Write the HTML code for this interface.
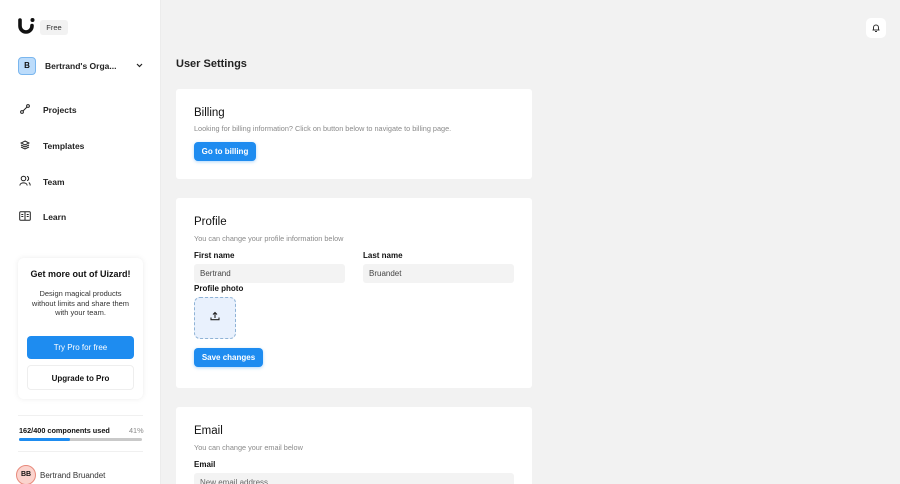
<!DOCTYPE html>
<html style="overflow:hidden;width:900px;height:484px"><head><meta charset="utf-8"><style>
*{box-sizing:border-box;margin:0;padding:0}
body{width:900px;height:484px;overflow:hidden;background:#f2f2f2;font-family:"Liberation Sans",sans-serif;color:#111;position:relative}
.abs{position:absolute}
.side{left:0;top:0;width:161px;height:484px;background:#fff;border-right:1px solid #ececec}
.nav{font-size:8.5px;font-weight:bold;color:#222}
.card{background:#fff;border-radius:3px;left:176px;width:356px}
h2{font-size:11.5px;font-weight:normal;color:#111}
.sub{font-size:7.3px;color:#8a8a8a}
.btn{background:#1e8cf0;color:#fff;font-size:8px;font-weight:bold;border-radius:4px;text-align:center;box-shadow:0 1px 3px rgba(30,140,240,.35)}
.lbl{font-size:8px;font-weight:bold}
.inp{background:#f3f3f3;border-radius:3px;font-size:8px;color:#444;padding-left:6px;line-height:19px;height:19px}
</style></head><body>
<div class="abs side">
  <svg class="abs" style="left:17px;top:17px" width="20" height="18" viewBox="0 0 20 18"><path d="M3 3 V9 A6 6 0 0 0 15 9 V8.5" fill="none" stroke="#111" stroke-width="3.6" stroke-linecap="round"/><circle cx="15.5" cy="3" r="2" fill="#111"/></svg>
  <div class="abs" style="left:40px;top:20px;width:28px;height:15px;background:#f2f2f2;border-radius:3px;font-size:7.5px;color:#333;text-align:center;line-height:15px">Free</div>
  <div class="abs" style="left:18px;top:57px;width:18px;height:18px;background:#bcdcfb;border:1px solid #7ab6ee;border-radius:4px;font-size:8px;font-weight:bold;text-align:center;line-height:16px">B</div>
  <div class="abs nav" style="left:45px;top:61px">Bertrand's Orga...</div>
  <svg class="abs" style="left:136px;top:63px" width="7" height="5" viewBox="0 0 7 5"><path d="M1 1 L3.5 3.5 L6 1" fill="none" stroke="#222" stroke-width="1.2"/></svg>
  <svg class="abs" style="left:20px;top:104px" width="10" height="10" viewBox="0 0 10 10" fill="none" stroke="#222" stroke-width="1"><circle cx="2" cy="8" r="1.4"/><circle cx="8" cy="2" r="1.4"/><path d="M3 7 L7 3"/></svg>
  <div class="abs nav" style="left:43px;top:105px">Projects</div>
  <svg class="abs" style="left:20px;top:140px" width="10" height="10" viewBox="0 0 10 10" fill="none" stroke="#222" stroke-width="1"><path d="M5 1 L9 3 L5 5 L1 3 Z M1 5 L5 7 L9 5 M1 7 L5 9 L9 7"/></svg>
  <div class="abs nav" style="left:43px;top:141px">Templates</div>
  <svg class="abs" style="left:19px;top:175px" width="12" height="11" viewBox="0 0 12 11" fill="none" stroke="#222" stroke-width="1"><circle cx="4.5" cy="3.5" r="2.3"/><path d="M0.8 10.5 C1 7 8 7 8.2 10.5 M8 1.3 A2.3 2.3 0 0 1 8 5.7 M9.8 7.5 C11 8.3 11.2 9.5 11.2 10.5"/></svg>
  <div class="abs nav" style="left:43px;top:177px">Team</div>
  <svg class="abs" style="left:19px;top:211px" width="12" height="10" viewBox="0 0 12 10" fill="none" stroke="#222" stroke-width="1"><rect x="0.7" y="0.7" width="10.6" height="8.6" rx="1"/><path d="M6 1 V9 M2.3 3.5 H4.3 M2.3 5.5 H4.3 M7.7 3.5 H9.7 M7.7 5.5 H9.7"/></svg>
  <div class="abs nav" style="left:43px;top:212px">Learn</div>
  <div class="abs" style="left:18px;top:258px;width:125px;height:141px;background:#fff;border-radius:6px;box-shadow:0 0 6px rgba(0,0,0,.08)">
    <div style="text-align:center;font-size:9px;font-weight:bold;margin-top:11px">Get more out of Uizard!</div>
    <div style="text-align:center;font-size:7.5px;color:#333;line-height:9.5px;margin-top:10px">Design magical products<br>without limits and share them<br>with your team.</div>
  </div>
  <div class="abs btn" style="left:27px;top:336px;width:107px;height:23px;line-height:23px;box-shadow:none;font-weight:normal">Try Pro for free</div>
  <div class="abs" style="left:27px;top:365px;width:107px;height:25px;line-height:25px;border:1px solid #eee;border-radius:4px;font-size:8px;font-weight:bold;text-align:center">Upgrade to Pro</div>
  <div class="abs" style="left:18px;top:415px;width:125px;border-top:1px solid #f0f0f0"></div>
  <div class="abs" style="left:19px;top:426px;font-size:7.3px;font-weight:bold">162/400 components used</div>
  <div class="abs" style="left:129px;top:426px;font-size:7.3px;color:#888">41%</div>
  <div class="abs" style="left:19px;top:438px;width:123px;height:3px;background:#c9c9c9;border-radius:2px"><div style="width:51px;height:3px;background:#1e8cf0;border-radius:2px"></div></div>
  <div class="abs" style="left:18px;top:451px;width:125px;border-top:1px solid #f0f0f0"></div>
  <div class="abs" style="left:16px;top:465px;width:20px;height:20px;border-radius:50%;background:#fbd3cd;border:1px solid #e88a7c;font-size:7px;font-weight:bold;text-align:center;line-height:18px">BB</div>
  <div class="abs" style="left:40px;top:471px;font-size:8px;color:#333">Bertrand Bruandet</div>
</div>
<div class="abs" style="left:866px;top:18px;width:20px;height:20px;background:#fff;border-radius:5px"></div>
<svg class="abs" style="left:871px;top:23px" width="10" height="10" viewBox="0 0 10 10" fill="none" stroke="#333" stroke-width="1"><path d="M2.5 7 V4.5 A2.5 2.5 0 0 1 7.5 4.5 V7 Z M1.5 7 H8.5 M4 8.5 H6"/></svg>
<div class="abs" style="left:176px;top:58px;font-size:11px;font-weight:bold;color:#222">User Settings</div>
<div class="abs card" style="top:89px;height:90px">
  <h2 class="abs" style="left:18px;top:18px">Billing</h2>
  <div class="abs sub" style="left:18px;top:35px">Looking for billing information? Click on button below to navigate to billing page.</div>
  <div class="abs btn" style="left:18px;top:53px;width:62px;height:19px;line-height:19px">Go to billing</div>
</div>
<div class="abs card" style="top:198px;height:190px">
  <h2 class="abs" style="left:18px;top:18px">Profile</h2>
  <div class="abs sub" style="left:18px;top:36px">You can change your profile information below</div>
  <div class="abs lbl" style="left:18px;top:53px">First name</div>
  <div class="abs lbl" style="left:187px;top:53px">Last name</div>
  <div class="abs inp" style="left:18px;top:66px;width:151px">Bertrand</div>
  <div class="abs inp" style="left:187px;top:66px;width:151px">Bruandet</div>
  <div class="abs lbl" style="left:18px;top:86px">Profile photo</div>
  <div class="abs" style="left:18px;top:99px;width:42px;height:42px;background:#e9f1fd;border:1px dashed #8fb3d6;border-radius:6px"></div>
  <svg class="abs" style="left:34px;top:113px" width="10" height="10" viewBox="0 0 10 10" fill="none" stroke="#222" stroke-width="1.1"><path d="M5 7 V1.5 M3 3.5 L5 1.5 L7 3.5 M1 6.5 V8.7 H9 V6.5"/></svg>
  <div class="abs btn" style="left:18px;top:150px;width:69px;height:19px;line-height:19px">Save changes</div>
</div>
<div class="abs card" style="top:407px;height:77px;border-radius:3px 3px 0 0;overflow:hidden">
  <h2 class="abs" style="left:18px;top:18px">Email</h2>
  <div class="abs sub" style="left:18px;top:36px">You can change your email below</div>
  <div class="abs lbl" style="left:18px;top:53px">Email</div>
  <div class="abs inp" style="left:18px;top:66px;width:320px;color:#666">New email address</div>
</div>
</body></html>
